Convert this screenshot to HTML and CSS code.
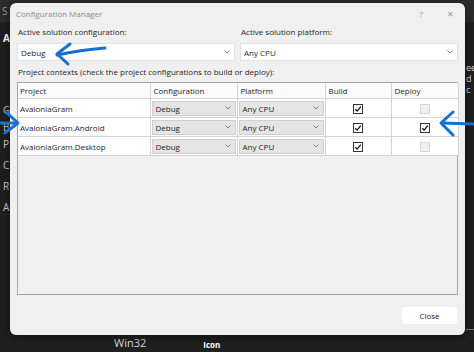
FILE: index.html
```html
<!DOCTYPE html>
<html lang="en">
<head>
    <meta charset="UTF-8">
    <title>Configuration Manager</title>
    <link rel="stylesheet" href="styles.css">
</head>
<body>

    <div class="app">
        <div class="topbar"><span class="tb-s">S</span></div>
        <div class="main">
            <div class="side">
                <span class="side-a">A</span>
                <span class="side-g">G</span>
                <span>B</span>
                <span>P</span>
                <span class="side-c">C</span>
                <span class="side-r">R</span>
                <span class="side-r">A</span>
            </div>
            <div class="center"></div>
            <div class="rside">
                <span class="r1">ee</span>
                <span>d c</span>
                <div class="rline"></div>
            </div>
        </div>
        <div class="bottombar">
            <span class="win32">Win32</span>
            <span class="icon-lbl">Icon</span>
        </div>
    </div>

    <div class="dialog">
        <div class="titlebar">
            <span class="title">Configuration Manager</span>
            <span class="tb-btns"><span>?</span><span class="x">&#x2715;</span></span>
        </div>
        <div class="dlg-body">
            <div class="sel-row">
                <div class="field">
                    <div class="lbl">Active solution configuration:</div>
                    <div class="combo"><span>Debug</span><svg class="chev" width="6" height="4" viewBox="0 0 6 4"><polyline points="0.5,0.5 3,3 5.5,0.5" fill="none" stroke="#777" stroke-width="0.9"/></svg></div>
                </div>
                <div class="field">
                    <div class="lbl">Active solution platform:</div>
                    <div class="combo"><span>Any CPU</span><svg class="chev" width="6" height="4" viewBox="0 0 6 4"><polyline points="0.5,0.5 3,3 5.5,0.5" fill="none" stroke="#777" stroke-width="0.9"/></svg></div>
                </div>
            </div>
            <div class="ctx-label">Project contexts (check the project configurations to build or deploy):</div>
            <div class="grid-box">
                <table class="grid">
                    <colgroup>
                        <col class="c-proj"><col class="c-conf"><col class="c-plat"><col class="c-build"><col class="c-deploy">
                    </colgroup>
                    <thead>
                        <tr><th>Project</th><th>Configuration</th><th>Platform</th><th>Build</th><th>Deploy</th></tr>
                    </thead>
                    <tbody>
                        <tr>
                            <td>AvaloniaGram</td>
                            <td class="cell-combo"><div class="mini">Debug<svg class="chev" width="6" height="4" viewBox="0 0 6 4"><polyline points="0.5,0.5 3,3 5.5,0.5" fill="none" stroke="#777" stroke-width="0.9"/></svg></div></td>
                            <td class="cell-combo"><div class="mini">Any CPU<svg class="chev" width="6" height="4" viewBox="0 0 6 4"><polyline points="0.5,0.5 3,3 5.5,0.5" fill="none" stroke="#777" stroke-width="0.9"/></svg></div></td>
                            <td class="cell-chk"><span class="chk on"><svg width="8" height="8" viewBox="0 0 8 8"><polyline points="1.3,4.2 3.1,6.1 6.8,1.6" fill="none" stroke="#111" stroke-width="1.3"/></svg></span></td>
                            <td class="cell-chk"><span class="chk off"></span></td>
                        </tr>
                        <tr class="sel">
                            <td>AvaloniaGram.Android</td>
                            <td class="cell-combo"><div class="mini">Debug<svg class="chev" width="6" height="4" viewBox="0 0 6 4"><polyline points="0.5,0.5 3,3 5.5,0.5" fill="none" stroke="#777" stroke-width="0.9"/></svg></div></td>
                            <td class="cell-combo"><div class="mini">Any CPU<svg class="chev" width="6" height="4" viewBox="0 0 6 4"><polyline points="0.5,0.5 3,3 5.5,0.5" fill="none" stroke="#777" stroke-width="0.9"/></svg></div></td>
                            <td class="cell-chk"><span class="chk on"><svg width="8" height="8" viewBox="0 0 8 8"><polyline points="1.3,4.2 3.1,6.1 6.8,1.6" fill="none" stroke="#111" stroke-width="1.3"/></svg></span></td>
                            <td class="cell-chk"><span class="chk on"><svg width="8" height="8" viewBox="0 0 8 8"><polyline points="1.3,4.2 3.1,6.1 6.8,1.6" fill="none" stroke="#111" stroke-width="1.3"/></svg></span></td>
                        </tr>
                        <tr>
                            <td>AvaloniaGram.Desktop</td>
                            <td class="cell-combo"><div class="mini">Debug<svg class="chev" width="6" height="4" viewBox="0 0 6 4"><polyline points="0.5,0.5 3,3 5.5,0.5" fill="none" stroke="#777" stroke-width="0.9"/></svg></div></td>
                            <td class="cell-combo"><div class="mini">Any CPU<svg class="chev" width="6" height="4" viewBox="0 0 6 4"><polyline points="0.5,0.5 3,3 5.5,0.5" fill="none" stroke="#777" stroke-width="0.9"/></svg></div></td>
                            <td class="cell-chk"><span class="chk on"><svg width="8" height="8" viewBox="0 0 8 8"><polyline points="1.3,4.2 3.1,6.1 6.8,1.6" fill="none" stroke="#111" stroke-width="1.3"/></svg></span></td>
                            <td class="cell-chk"><span class="chk off"></span></td>
                        </tr>
                    </tbody>
                </table>
            </div>
            <div class="footer">
                <button class="close-btn">Close</button>
            </div>
        </div>
    </div>

    <!-- annotation arrows drawn over the screenshot -->
    <svg class="arrows" width="474" height="352" viewBox="0 0 474 352">
        <g fill="none" stroke="#1570d0" stroke-width="3" stroke-linecap="round" stroke-linejoin="round">
            <path d="M105 48 Q80 50 57 55"/>
            <path d="M70 44 L57 54 L68 64"/>
            <path d="M-2 123 L17 123"/>
            <path d="M6 112 L18 123 L5 133"/>
            <path d="M476 124 L442 123"/>
            <path d="M453 112 L441 123 L453 135"/>
        </g>
    </svg>

</body>
</html>
```

FILE: styles.css
```css
body {
    margin: 0;
    width: 474px;
    height: 352px;
    overflow: hidden;
    background: #1f1f1f;
    font-family: "Open Sans", "Noto Sans", sans-serif;
    position: relative;
}
.app {
    display: flex;
    flex-direction: column;
    height: 352px;
    color: #ddd;
}
.topbar {
    height: 22px;
    background: #2b2b2b;
    display: flex;
    align-items: center;
    padding-left: 2px;
    font-size: 10px;
    color: #999;
}
.main {
    flex: 1;
    display: flex;
}
.side {
    width: 10px;
    display: flex;
    flex-direction: column;
    padding-left: 3px;
    font-size: 10px;
    line-height: 17px;
    color: #ccc;
}
.side-a {
    margin-top: 8px;
    font-weight: bold;
    color: #fff;
}
.side-g {
    margin-top: 55px;
}
.side-c, .side-r {
    margin-top: 4px;
}
.center {
    flex: 1;
}
.rside {
    width: 8px;
    display: flex;
    flex-direction: column;
    padding-top: 40px;
    font-size: 9px;
    line-height: 11px;
    color: #ddd;
    overflow: hidden;
}
.rline {
    margin-top: 234px;
    height: 1px;
    background: #777;
}
.bottombar {
    height: 16px;
    display: flex;
    align-items: flex-start;
    padding-left: 114px;
}
.win32 {
    font-size: 11px;
    line-height: 14px;
    color: #ddd;
}
.icon-lbl {
    margin-left: 57px;
    margin-top: 3px;
    font-size: 8px;
    font-weight: bold;
    color: #fff;
}

/* dialog window */
.dialog {
    position: absolute;
    left: 10px;
    top: 3px;
    width: 455px;
    height: 332px;
    background: #f0f0f0;
    border-radius: 6px;
    box-shadow: 0 2px 8px rgba(0, 0, 0, 0.5);
    display: flex;
    flex-direction: column;
    color: #1e1e1e;
    font-size: 8px;
}
.titlebar {
    height: 20px;
    display: flex;
    align-items: center;
    justify-content: space-between;
    padding: 0 11px 0 6px;
}
.title {
    color: #8a8a8a;
    font-size: 8px;
}
.tb-btns {
    display: flex;
    gap: 24px;
    color: #9a9a9a;
    font-size: 8px;
}
.tb-btns .x {
    font-size: 8px;
}
.dlg-body {
    flex: 1;
    display: flex;
    flex-direction: column;
    padding: 0 7px 11px 7px;
}
.sel-row {
    display: flex;
    gap: 5px;
}
.field {
    flex: 1;
}
.lbl {
    height: 20px;
    line-height: 18px;
    padding-left: 1px;
}
.combo {
    height: 16px;
    background: #fff;
    border: 1px solid #e2e2e2;
    display: flex;
    align-items: center;
    justify-content: space-between;
    padding: 0 4px 0 3px;
}
.ctx-label {
    height: 21px;
    line-height: 22px;
    padding-left: 1px;
}
.grid-box {
    height: 211px;
    border: 1px solid #a6a6a6;
    background: #f0f0f0;
}
.grid {
    width: 440px;
    border-collapse: collapse;
    table-layout: fixed;
    font-size: 8px;
}
.c-proj { width: 132px; }
.c-conf { width: 87px; }
.c-plat { width: 88px; }
.c-build { width: 66px; }
.c-deploy { width: 67px; }
.grid th, .grid td {
    height: 16px;
    padding: 0 0 0 3px;
    border: 1px solid #d4d4d4;
    background: #fff;
    text-align: left;
    font-weight: normal;
    white-space: nowrap;
    overflow: hidden;
}
.grid th {
    background: #fbfbfb;
    height: 15px;
    border-top: none;
}
.grid th:first-child, .grid td:first-child {
    border-left: none;
    padding-left: 2px;
}
.grid td.cell-combo {
    padding: 1px;
}
.mini {
    height: 13px;
    background: #e5e5e5;
    border: 1px solid #cfcfcf;
    display: flex;
    align-items: center;
    justify-content: space-between;
    padding: 0 4px 0 3px;
}
.grid td.cell-chk {
    text-align: center;
    padding: 0;
}
.chk {
    display: inline-flex;
    align-items: center;
    justify-content: center;
    width: 8px;
    height: 8px;
    vertical-align: middle;
}
.chk.on {
    background: #fff;
    border: 1px solid #333;
}
.chk.off {
    background: #efefef;
    border: 1px solid #d6d6d6;
}
.footer {
    flex: 1;
    display: flex;
    justify-content: flex-end;
    align-items: flex-end;
    padding-right: 1px;
}
.close-btn {
    width: 55px;
    height: 17px;
    background: #fff;
    border: none;
    border-radius: 2px;
    font-family: "Open Sans", "Noto Sans", sans-serif;
    font-size: 8px;
    color: #1e1e1e;
    padding: 0;
}

.arrows {
    position: absolute;
    left: 0;
    top: 0;
    pointer-events: none;
}
```
